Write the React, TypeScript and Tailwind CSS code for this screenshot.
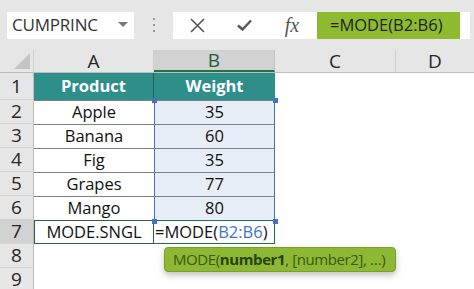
import React from "react";

const rows = [
  { n: 2, a: "Apple", b: "35" },
  { n: 3, a: "Banana", b: "60" },
  { n: 4, a: "Fig", b: "35" },
  { n: 5, a: "Grapes", b: "77" },
  { n: 6, a: "Mango", b: "80" },
];

function RowHead({ n, h, active }: { n: number; h: string; active?: boolean }) {
  return (
    <div
      className={`w-[34px] ${h} flex items-center justify-center text-[19px] text-[#262626] border-r border-[#bdbdbd] border-b border-b-[#d4d4d4] ${
        active ? "bg-[#d2d2d2]" : "bg-[#e6e6e6]"
      }`}
    >
      {n}
    </div>
  );
}

export default function App() {
  return (
    <div
      className="w-[474px] h-[289px] bg-white overflow-hidden relative"
      style={{ fontFamily: '"Open Sans", "Noto Sans", sans-serif' }}
    >
      {/* toolbar */}
      <div className="h-[50px] bg-[#e6e6e6] flex items-center">
        <div className="ml-[7px] w-[127px] h-[27px] bg-white flex items-center pl-[5px] pr-[6px]">
          <span className="text-[17px] text-[#333] tracking-[-0.2px] flex-1">CUMPRINC</span>
          <svg width="10" height="6" viewBox="0 0 10 6">
            <polygon points="0,0 10,0 5,5" fill="#777" />
          </svg>
        </div>
        <div className="w-[39px] flex flex-col items-center gap-[4px]">
          <div className="w-[2px] h-[2px] bg-[#999]" />
          <div className="w-[2px] h-[2px] bg-[#999]" />
          <div className="w-[2px] h-[2px] bg-[#999]" />
        </div>
        <div className="w-[297px] h-[27px] bg-white flex items-center">
          <div className="w-[48px] flex justify-center">
            <svg width="15" height="15" viewBox="0 0 15 15">
              <path d="M1 1 L14 14 M14 1 L1 14" stroke="#555" strokeWidth="1.6" />
            </svg>
          </div>
          <div className="w-[46px] flex justify-center">
            <svg width="15" height="12" viewBox="0 0 15 12">
              <path d="M1 6.5 L5.5 10.5 L14 1.5" stroke="#555" strokeWidth="2.4" fill="none" />
            </svg>
          </div>
          <div className="w-[50px] flex justify-center">
            <span
              className="text-[20px] italic text-[#555] leading-none"
              style={{ fontFamily: '"Liberation Serif", serif' }}
            >
              fx
            </span>
          </div>
          <div className="w-[143px] h-[27px] bg-[#8dba2f] flex items-center pl-[13px] text-[16.5px] text-[#222]">
            =MODE(B2:B6)
          </div>
        </div>
      </div>

      {/* header row */}
      <div className="h-[23px] flex bg-[#e6e6e6] border-b border-[#bdbdbd]">
        <div className="w-[34px] h-full border-r border-[#d0d0d0] flex items-end justify-end pr-[3px] pb-[3px]">
          <svg width="16" height="16" viewBox="0 0 16 16">
            <polygon points="16,0 16,16 0,16" fill="#c4c4c4" />
          </svg>
        </div>
        <div className="w-[120px] flex items-center justify-center text-[19px] text-[#262626] border-r border-[#d0d0d0]">A</div>
        <div className="w-[121px] flex items-center justify-center text-[19px] text-[#1e5e38] bg-[#d2d2d2] border-r border-[#c0c0c0] border-b-2 border-b-[#217346]">B</div>
        <div className="w-[121px] flex items-center justify-center text-[19px] text-[#262626] border-r border-[#d0d0d0]">C</div>
        <div className="flex-1 flex items-center justify-center text-[19px] text-[#262626]">D</div>
      </div>

      {/* body */}
      <div className="flex">
        <div className="flex flex-col">
          <RowHead n={1} h="h-[27px]" />
          {rows.map((r) => (
            <RowHead key={r.n} n={r.n} h="h-[24px]" />
          ))}
          <RowHead n={7} h="h-[24px]" active />
          <RowHead n={8} h="h-[24px]" />
          <RowHead n={9} h="h-[24px]" />
        </div>
        <div className="flex flex-col relative">
          {/* row 1 */}
          <div className="flex h-[27px]">
            <div className="w-[120px] bg-[#2e8e8a] text-white font-bold text-[16.5px] flex items-center justify-center border-r border-[#1f5f5c]">Product</div>
            <div className="w-[121px] bg-[#2e8e8a] text-white font-bold text-[16.5px] flex items-center justify-center">Weight</div>
          </div>
          {rows.map((r) => (
            <div key={r.n} className="flex h-[24px]">
              <div className="w-[120px] text-[16.5px] text-[#111] flex items-center justify-center border-t border-[#808080]">{r.a}</div>
              <div className="w-[121px] bg-[#e8eef8] text-[16.5px] text-[#111] flex items-center justify-center border-t border-[#808080] border-l border-r border-l-[#4472c4] border-r-[#4472c4]">{r.b}</div>
            </div>
          ))}
          {/* row 7 */}
          <div className="flex h-[24px]">
            <div className="w-[120px] text-[16.5px] text-[#111] flex items-center justify-center border border-[#2f5f3f]">MODE.SNGL</div>
            <div className="w-[121px] text-[16.5px] text-[#111] flex items-center pl-[1px] border border-l-0 border-[#217346] whitespace-nowrap">
              =MODE(<span className="text-[#4472c4]">B2:B6</span>)
            </div>
          </div>
          {/* selection handles */}
          <div className="absolute left-[118px] top-[25px] w-[5px] h-[5px] bg-[#4472c4]" />
          <div className="absolute left-[239px] top-[25px] w-[5px] h-[5px] bg-[#4472c4]" />
          <div className="absolute left-[118px] top-[146px] w-[5px] h-[5px] bg-[#4472c4]" />
          <div className="absolute left-[239px] top-[146px] w-[5px] h-[5px] bg-[#4472c4]" />
        </div>
      </div>

      {/* tooltip */}
      <div className="absolute left-[164px] top-[247px] w-[232px] h-[25px] rounded-[4px] bg-[#8cb834] border border-[#79a02a] shadow-[0_3px_6px_rgba(0,0,0,0.25)] flex items-center pl-[8px] text-[15px] tracking-[-0.4px] text-[#3b5a10] whitespace-nowrap">
        MODE(<span className="font-bold text-[#2a420a]">number1</span>, [number2], …)
      </div>
    </div>
  );
}
